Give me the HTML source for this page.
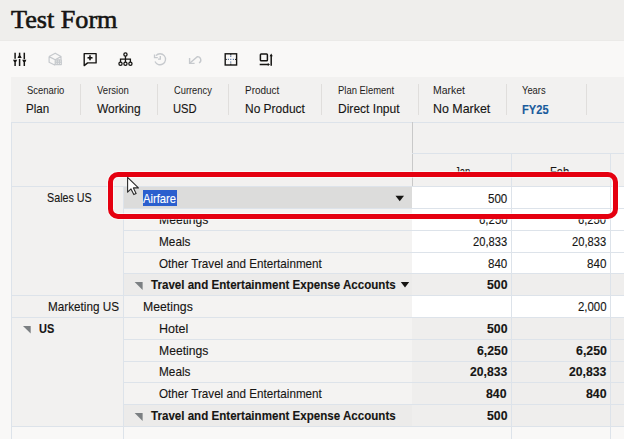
<!DOCTYPE html>
<html><head><meta charset="utf-8"><style>
html,body{margin:0;padding:0;width:624px;height:439px;overflow:hidden;background:#f9f8f7;}
body>div{position:absolute;}
.t{white-space:nowrap;line-height:normal;-webkit-text-stroke:0.12px currentColor;}
</style></head><body>
<div style="left:0px;top:0px;width:624px;height:439px;background:#f9f8f7;"></div>
<div style="left:0px;top:0px;width:624px;height:41px;background:#efeeec;"></div>
<div style="left:0px;top:40px;width:624px;height:1px;background:#ebeae8;"></div>
<div class="t" style="left:10.80px;top:4.70px;font-size:25.5px;font-weight:400;color:#161513;font-family:'Liberation Serif', serif;transform:scaleX(1.0260);transform-origin:0 0;-webkit-text-stroke:0.6px currentColor;">Test Form</div>
<div style="left:11px;top:77px;width:613px;height:45px;background:#f2f1f0;"></div>
<div class="t" style="left:26.70px;top:85.30px;font-size:10.2px;font-weight:400;color:#1f1d1b;font-family:'Liberation Sans', sans-serif;transform:scaleX(0.9262);transform-origin:0 0;-webkit-text-stroke:0;">Scenario</div>
<div class="t" style="left:97.00px;top:85.30px;font-size:10.2px;font-weight:400;color:#1f1d1b;font-family:'Liberation Sans', sans-serif;transform:scaleX(0.9353);transform-origin:0 0;-webkit-text-stroke:0;">Version</div>
<div class="t" style="left:174.00px;top:85.30px;font-size:10.2px;font-weight:400;color:#1f1d1b;font-family:'Liberation Sans', sans-serif;transform:scaleX(0.9143);transform-origin:0 0;-webkit-text-stroke:0;">Currency</div>
<div class="t" style="left:244.82px;top:85.30px;font-size:10.2px;font-weight:400;color:#1f1d1b;font-family:'Liberation Sans', sans-serif;transform:scaleX(0.9794);transform-origin:0 0;-webkit-text-stroke:0;">Product</div>
<div class="t" style="left:337.57px;top:85.30px;font-size:10.2px;font-weight:400;color:#1f1d1b;font-family:'Liberation Sans', sans-serif;transform:scaleX(0.9267);transform-origin:0 0;-webkit-text-stroke:0;">Plan Element</div>
<div class="t" style="left:432.77px;top:85.30px;font-size:10.2px;font-weight:400;color:#1f1d1b;font-family:'Liberation Sans', sans-serif;transform:scaleX(1.0267);transform-origin:0 0;-webkit-text-stroke:0;">Market</div>
<div class="t" style="left:522.40px;top:85.30px;font-size:10.2px;font-weight:400;color:#1f1d1b;font-family:'Liberation Sans', sans-serif;transform:scaleX(0.92);transform-origin:0 0;-webkit-text-stroke:0;">Years</div>
<div class="t" style="left:25.78px;top:102.40px;font-size:12.6px;font-weight:400;color:#161513;font-family:'Liberation Sans', sans-serif;transform:scaleX(0.9167);transform-origin:0 0;">Plan</div>
<div class="t" style="left:97.00px;top:102.40px;font-size:12.6px;font-weight:400;color:#161513;font-family:'Liberation Sans', sans-serif;transform:scaleX(0.9500);transform-origin:0 0;">Working</div>
<div class="t" style="left:173.11px;top:102.40px;font-size:12.6px;font-weight:400;color:#161513;font-family:'Liberation Sans', sans-serif;transform:scaleX(0.8920);transform-origin:0 0;">USD</div>
<div class="t" style="left:244.85px;top:102.40px;font-size:12.6px;font-weight:400;color:#161513;font-family:'Liberation Sans', sans-serif;transform:scaleX(0.9500);transform-origin:0 0;">No Product</div>
<div class="t" style="left:337.54px;top:102.40px;font-size:12.6px;font-weight:400;color:#161513;font-family:'Liberation Sans', sans-serif;transform:scaleX(0.9562);transform-origin:0 0;">Direct Input</div>
<div class="t" style="left:432.81px;top:102.40px;font-size:12.6px;font-weight:400;color:#161513;font-family:'Liberation Sans', sans-serif;transform:scaleX(0.9860);transform-origin:0 0;">No Market</div>
<div class="t" style="left:521.72px;top:102.70px;font-size:12.6px;font-weight:700;color:#195b9c;font-family:'Liberation Sans', sans-serif;transform:scaleX(0.8828);transform-origin:0 0;">FY25</div>
<div style="left:80px;top:84px;width:1px;height:31px;background:#e0dedc;"></div>
<div style="left:157px;top:84px;width:1px;height:31px;background:#e0dedc;"></div>
<div style="left:228px;top:84px;width:1px;height:31px;background:#e0dedc;"></div>
<div style="left:321px;top:84px;width:1px;height:31px;background:#e0dedc;"></div>
<div style="left:418px;top:84px;width:1px;height:31px;background:#e0dedc;"></div>
<div style="left:506px;top:84px;width:1px;height:31px;background:#e0dedc;"></div>
<div style="left:586px;top:84px;width:1px;height:31px;background:#e0dedc;"></div>
<div style="left:11px;top:122px;width:613px;height:64px;background:#f2f1f0;"></div>
<div style="left:11px;top:122px;width:613px;height:1px;background:#dde3ea;"></div>
<div style="left:11px;top:122px;width:1px;height:317px;background:#dde3ea;"></div>
<div style="left:412px;top:122px;width:1px;height:64px;background:#c9c9c9;"></div>
<div style="left:412px;top:153px;width:212px;height:1px;background:#dde3ea;"></div>
<div style="left:12px;top:186px;width:111px;height:240px;background:#f2f1f0;"></div>
<div style="left:124px;top:186px;width:288px;height:22px;background:#f4f3f2;"></div>
<div style="left:412px;top:186px;width:212px;height:22px;background:#ffffff;"></div>
<div style="left:124px;top:208px;width:288px;height:22px;background:#f4f3f2;"></div>
<div style="left:412px;top:208px;width:212px;height:22px;background:#ffffff;"></div>
<div style="left:124px;top:230px;width:288px;height:22px;background:#f4f3f2;"></div>
<div style="left:412px;top:230px;width:212px;height:22px;background:#ffffff;"></div>
<div style="left:124px;top:252px;width:288px;height:21px;background:#f4f3f2;"></div>
<div style="left:412px;top:252px;width:212px;height:21px;background:#ffffff;"></div>
<div style="left:124px;top:273px;width:288px;height:22px;background:#ecebea;"></div>
<div style="left:412px;top:273px;width:212px;height:22px;background:#efeeed;"></div>
<div style="left:124px;top:295px;width:288px;height:22px;background:#f4f3f2;"></div>
<div style="left:412px;top:295px;width:212px;height:22px;background:#ffffff;"></div>
<div style="left:124px;top:317px;width:288px;height:22px;background:#f4f3f2;"></div>
<div style="left:412px;top:317px;width:212px;height:22px;background:#efeeed;"></div>
<div style="left:124px;top:339px;width:288px;height:22px;background:#f4f3f2;"></div>
<div style="left:412px;top:339px;width:212px;height:22px;background:#efeeed;"></div>
<div style="left:124px;top:361px;width:288px;height:21px;background:#f4f3f2;"></div>
<div style="left:412px;top:361px;width:212px;height:21px;background:#efeeed;"></div>
<div style="left:124px;top:382px;width:288px;height:22px;background:#f4f3f2;"></div>
<div style="left:412px;top:382px;width:212px;height:22px;background:#efeeed;"></div>
<div style="left:124px;top:404px;width:288px;height:22px;background:#ecebea;"></div>
<div style="left:412px;top:404px;width:212px;height:22px;background:#efeeed;"></div>
<div style="left:12px;top:427px;width:612px;height:12px;background:#f9f8f7;"></div>
<div style="left:124px;top:186px;width:288px;height:22px;background:#dcdcdb;"></div>
<div style="left:124px;top:186px;width:288px;height:1px;background:#e9e9e9;"></div>
<div style="left:412px;top:186px;width:212px;height:22px;background:#ffffff;"></div>
<div style="left:142.5px;top:190.2px;width:34.6px;height:15.8px;background:#2b5fce;"></div>
<div style="left:11px;top:186px;width:613px;height:1px;background:#dde3ea;"></div>
<div style="left:123px;top:208px;width:501px;height:1px;background:#dde3ea;"></div>
<div style="left:123px;top:230px;width:501px;height:1px;background:#dde3ea;"></div>
<div style="left:123px;top:252px;width:501px;height:1px;background:#dde3ea;"></div>
<div style="left:123px;top:273px;width:501px;height:1px;background:#dde3ea;"></div>
<div style="left:11px;top:295px;width:613px;height:1px;background:#dde3ea;"></div>
<div style="left:11px;top:317px;width:613px;height:1px;background:#dde3ea;"></div>
<div style="left:123px;top:339px;width:501px;height:1px;background:#dde3ea;"></div>
<div style="left:123px;top:361px;width:501px;height:1px;background:#dde3ea;"></div>
<div style="left:123px;top:382px;width:501px;height:1px;background:#dde3ea;"></div>
<div style="left:123px;top:404px;width:501px;height:1px;background:#dde3ea;"></div>
<div style="left:11px;top:426px;width:613px;height:1px;background:#dde3ea;"></div>
<div style="left:123px;top:186px;width:1px;height:253px;background:#dde3ea;"></div>
<div style="left:511px;top:153px;width:1px;height:286px;background:#dde3ea;"></div>
<div style="left:610px;top:153px;width:1px;height:286px;background:#dde3ea;"></div>
<div class="t" style="left:454.90px;top:164.50px;font-size:12.6px;font-weight:400;color:#161513;font-family:'Liberation Sans', sans-serif;transform:scaleX(0.7550);transform-origin:0 0;">Jan</div>
<div class="t" style="left:550.42px;top:164.50px;font-size:12.6px;font-weight:400;color:#161513;font-family:'Liberation Sans', sans-serif;transform:scaleX(0.8810);transform-origin:0 0;">Feb</div>
<div class="t" style="left:46.65px;top:191.10px;font-size:12.6px;font-weight:400;color:#161513;font-family:'Liberation Sans', sans-serif;transform:scaleX(0.8529);transform-origin:0 0;">Sales US</div>
<div class="t" style="left:47.57px;top:300.30px;font-size:12.6px;font-weight:400;color:#161513;font-family:'Liberation Sans', sans-serif;transform:scaleX(0.9307);transform-origin:0 0;">Marketing US</div>
<div class="t" style="left:39.00px;top:321.70px;font-size:12.6px;font-weight:700;color:#161513;font-family:'Liberation Sans', sans-serif;transform:scaleX(0.8706);transform-origin:0 0;">US</div>
<div class="t" style="left:143.30px;top:191.50px;font-size:12.6px;font-weight:400;color:#ffffff;font-family:'Liberation Sans', sans-serif;transform:scaleX(0.8919);transform-origin:0 0;">Airfare</div>
<div class="t" style="left:488.00px;top:191.50px;font-size:12.6px;font-weight:400;color:#161513;font-family:'Liberation Sans', sans-serif;transform:scaleX(0.9190);transform-origin:0 0;">500</div>
<div class="t" style="left:159.03px;top:213.24px;font-size:12.6px;font-weight:400;color:#161513;font-family:'Liberation Sans', sans-serif;transform:scaleX(0.9660);transform-origin:0 0;">Meetings</div>
<div class="t" style="left:479.10px;top:213.24px;font-size:12.6px;font-weight:400;color:#161513;font-family:'Liberation Sans', sans-serif;transform:scaleX(0.9097);transform-origin:0 0;">6,250</div>
<div class="t" style="left:578.20px;top:213.24px;font-size:12.6px;font-weight:400;color:#161513;font-family:'Liberation Sans', sans-serif;transform:scaleX(0.8903);transform-origin:0 0;">6,250</div>
<div class="t" style="left:159.06px;top:234.98px;font-size:12.6px;font-weight:400;color:#161513;font-family:'Liberation Sans', sans-serif;transform:scaleX(0.9375);transform-origin:0 0;">Meals</div>
<div class="t" style="left:472.60px;top:234.98px;font-size:12.6px;font-weight:400;color:#161513;font-family:'Liberation Sans', sans-serif;transform:scaleX(0.8868);transform-origin:0 0;">20,833</div>
<div class="t" style="left:572.00px;top:234.98px;font-size:12.6px;font-weight:400;color:#161513;font-family:'Liberation Sans', sans-serif;transform:scaleX(0.8868);transform-origin:0 0;">20,833</div>
<div class="t" style="left:159.40px;top:256.72px;font-size:12.6px;font-weight:400;color:#161513;font-family:'Liberation Sans', sans-serif;transform:scaleX(0.9267);transform-origin:0 0;">Other Travel and Entertainment</div>
<div class="t" style="left:488.00px;top:256.72px;font-size:12.6px;font-weight:400;color:#161513;font-family:'Liberation Sans', sans-serif;transform:scaleX(0.9190);transform-origin:0 0;">840</div>
<div class="t" style="left:587.10px;top:256.72px;font-size:12.6px;font-weight:400;color:#161513;font-family:'Liberation Sans', sans-serif;transform:scaleX(0.9238);transform-origin:0 0;">840</div>
<div class="t" style="left:150.60px;top:278.46px;font-size:12.6px;font-weight:700;color:#161513;font-family:'Liberation Sans', sans-serif;transform:scaleX(0.9192);transform-origin:0 0;">Travel and Entertainment Expense Accounts</div>
<div class="t" style="left:486.80px;top:278.46px;font-size:12.6px;font-weight:700;color:#161513;font-family:'Liberation Sans', sans-serif;transform:scaleX(0.9762);transform-origin:0 0;">500</div>
<div class="t" style="left:142.63px;top:300.20px;font-size:12.6px;font-weight:400;color:#161513;font-family:'Liberation Sans', sans-serif;transform:scaleX(0.9740);transform-origin:0 0;">Meetings</div>
<div class="t" style="left:577.70px;top:300.20px;font-size:12.6px;font-weight:400;color:#161513;font-family:'Liberation Sans', sans-serif;transform:scaleX(0.9065);transform-origin:0 0;">2,000</div>
<div class="t" style="left:158.91px;top:321.94px;font-size:12.6px;font-weight:400;color:#161513;font-family:'Liberation Sans', sans-serif;transform:scaleX(0.9929);transform-origin:0 0;">Hotel</div>
<div class="t" style="left:486.80px;top:321.94px;font-size:12.6px;font-weight:700;color:#161513;font-family:'Liberation Sans', sans-serif;transform:scaleX(0.9762);transform-origin:0 0;">500</div>
<div class="t" style="left:159.03px;top:343.68px;font-size:12.6px;font-weight:400;color:#161513;font-family:'Liberation Sans', sans-serif;transform:scaleX(0.9660);transform-origin:0 0;">Meetings</div>
<div class="t" style="left:476.70px;top:343.68px;font-size:12.6px;font-weight:700;color:#161513;font-family:'Liberation Sans', sans-serif;transform:scaleX(0.9742);transform-origin:0 0;">6,250</div>
<div class="t" style="left:575.70px;top:343.68px;font-size:12.6px;font-weight:700;color:#161513;font-family:'Liberation Sans', sans-serif;transform:scaleX(0.9839);transform-origin:0 0;">6,250</div>
<div class="t" style="left:159.06px;top:365.42px;font-size:12.6px;font-weight:400;color:#161513;font-family:'Liberation Sans', sans-serif;transform:scaleX(0.9375);transform-origin:0 0;">Meals</div>
<div class="t" style="left:470.30px;top:365.42px;font-size:12.6px;font-weight:700;color:#161513;font-family:'Liberation Sans', sans-serif;transform:scaleX(0.9658);transform-origin:0 0;">20,833</div>
<div class="t" style="left:569.30px;top:365.42px;font-size:12.6px;font-weight:700;color:#161513;font-family:'Liberation Sans', sans-serif;transform:scaleX(0.9711);transform-origin:0 0;">20,833</div>
<div class="t" style="left:159.40px;top:387.16px;font-size:12.6px;font-weight:400;color:#161513;font-family:'Liberation Sans', sans-serif;transform:scaleX(0.9267);transform-origin:0 0;">Other Travel and Entertainment</div>
<div class="t" style="left:486.40px;top:387.16px;font-size:12.6px;font-weight:700;color:#161513;font-family:'Liberation Sans', sans-serif;transform:scaleX(0.9762);transform-origin:0 0;">840</div>
<div class="t" style="left:585.60px;top:387.16px;font-size:12.6px;font-weight:700;color:#161513;font-family:'Liberation Sans', sans-serif;transform:scaleX(0.9810);transform-origin:0 0;">840</div>
<div class="t" style="left:150.60px;top:408.90px;font-size:12.6px;font-weight:700;color:#161513;font-family:'Liberation Sans', sans-serif;transform:scaleX(0.9192);transform-origin:0 0;">Travel and Entertainment Expense Accounts</div>
<div class="t" style="left:486.80px;top:408.90px;font-size:12.6px;font-weight:700;color:#161513;font-family:'Liberation Sans', sans-serif;transform:scaleX(0.9762);transform-origin:0 0;">500</div>
<svg style="position:absolute;left:0;top:0" width="624" height="80" viewBox="0 0 624 80">
<g stroke="#161513" stroke-width="1.5" fill="none">
  <line x1="15.1" y1="52.7" x2="15.1" y2="58.8"/><line x1="15.1" y1="60" x2="15.1" y2="66"/>
  <line x1="19.6" y1="52.7" x2="19.6" y2="57.6"/><line x1="19.6" y1="58.9" x2="19.6" y2="66"/>
  <line x1="24.3" y1="52.7" x2="24.3" y2="59.2"/><line x1="24.3" y1="60" x2="24.3" y2="66"/>
</g>
<g fill="#161513">
  <path d="M13 59.8 H17.2 L16.1 62 H14.1 Z"/><path d="M17.5 57.9 H21.7 L20.6 55.7 H18.6 Z"/><path d="M22.2 59.8 H26.4 L25.3 62 H23.3 Z"/>
</g>
<g stroke="#c6c9cd" stroke-width="1.2" fill="none" stroke-linejoin="round">
  <path d="M49.1 56.6 L55.2 53.2 L61 56.6 V59.5 M49.1 56.6 V62.3 L55.2 65.2 M49.1 56.6 L55.2 59.8 L61 56.6 M55.2 59.8 V65.2"/>
  <rect x="55.9" y="59.8" width="5.4" height="4.8" fill="#f9f8f7"/>
  <line x1="57.7" y1="59.8" x2="57.7" y2="64.6"/><line x1="59.5" y1="59.8" x2="59.5" y2="64.6"/><line x1="55.9" y1="62.2" x2="61.3" y2="62.2"/>
</g>
<g stroke="#161513" stroke-width="1.4" fill="none" stroke-linejoin="round">
  <path d="M84.2 53.6 H96.1 V62.9 H87.6 L84.2 65.6 Z"/>
</g>
<g stroke="#161513" stroke-width="1.6" fill="none">
  <line x1="90" y1="55.3" x2="90" y2="60.3"/><line x1="87.5" y1="57.8" x2="92.5" y2="57.8"/>
</g>
<g stroke="#161513" stroke-width="1.3" fill="none">
  <circle cx="125.45" cy="54.5" r="1.6"/>
  <line x1="125.45" y1="56.1" x2="125.45" y2="62.1"/>
  <path d="M120.5 62.1 V59.2 H130.4 V62.1"/>
  <circle cx="120.5" cy="63.7" r="1.6"/><circle cx="125.45" cy="63.7" r="1.6"/><circle cx="130.4" cy="63.7" r="1.6"/>
</g>
<g stroke="#c6c9cd" stroke-width="1.3" fill="none">
  <path d="M155.9 55.6 A5.5 5.5 0 1 1 155 61.5"/>
  <path d="M154.5 54.5 V57.6 H157.8"/>
  <path d="M160.3 56.1 V59.2 H158"/>
</g>
<g stroke="#c6c9cd" stroke-width="1.4" fill="none">
  <path d="M189.7 63.2 L197.3 56.6 A3.4 3.4 0 0 1 199 63"/>
  <path d="M189.6 58 V63.4 H194.6"/>
</g>
<g stroke="#161513" stroke-width="1.4" fill="none">
  <rect x="225.2" y="53.8" width="11.4" height="11.2"/>
</g>
<g fill="#161513">
  <rect x="230.3" y="54" width="1" height="1.3"/><rect x="230.3" y="63.6" width="1" height="1.3"/>
  <rect x="225.5" y="58.9" width="1.3" height="1"/><rect x="235" y="58.9" width="1.3" height="1"/>
</g>
<g fill="#4a6a9a">
  <rect x="230.2" y="55.7" width="1.1" height="1.2"/><rect x="230.2" y="61.5" width="1.1" height="1.2"/>
  <rect x="227.8" y="58.8" width="1.2" height="1.1"/><rect x="232.8" y="58.8" width="1.2" height="1.1"/>
  <rect x="230.2" y="58.8" width="1.1" height="1.1"/>
</g>
<g stroke="#161513" stroke-width="1.5" fill="none">
  <rect x="260.4" y="54" width="7" height="6.8" rx="0.8"/>
  <line x1="259.7" y1="64.5" x2="268.5" y2="64.5"/>
  <line x1="271.2" y1="55" x2="271.2" y2="65.8"/>
</g>
<g fill="#161513">
  <path d="M269.6 56.2 L271.2 53.5 L272.8 56.2 Z"/>
  <path d="M267.8 63 L270 64.5 L267.8 66 Z"/>
</g>
</svg>
<svg style="position:absolute;left:0;top:0" width="624" height="439" viewBox="0 0 624 439"><path d="M395.5 195.8 H404 L399.75 201.3 Z" fill="#161513"/><path d="M400.8 282 H409.2 L405 287.4 Z" fill="#161513"/><path d="M134.6 282 H142.6 V290 Z" fill="#7b7f82"/><path d="M134.6 413 H142.6 V421 Z" fill="#7b7f82"/><path d="M23 326 H30.7 V333.5 Z" fill="#7b7f82"/></svg>
<div style="left:108px;top:172.2px;width:500px;height:37px;border:5px solid #e50010;border-radius:10px;box-shadow:0 0 0 1px rgba(255,255,255,0.55),inset 0 0 0 1px rgba(255,255,255,0.55);"></div>
<svg style="position:absolute;left:0;top:0" width="624" height="439" viewBox="0 0 624 439"><path d="M127.6 177.3 V192.2 L131 188.9 L133.8 194.6 L136.1 193.6 L133.4 187.9 H138.4 Z" fill="#ffffff" stroke="#2a2a2a" stroke-width="1.1" stroke-linejoin="round"/></svg>
</body></html>
